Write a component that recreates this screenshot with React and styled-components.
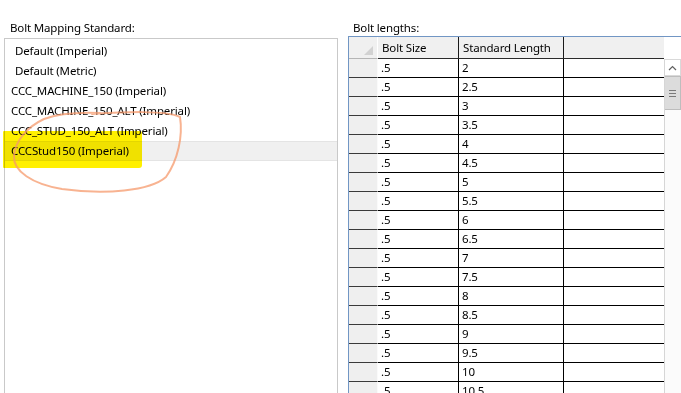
import React from "react";
import styled, { createGlobalStyle } from "styled-components";

const GlobalStyle = createGlobalStyle`
  html, body {
    margin: 0;
    padding: 0;
    background: #fff;
  }
  body {
    font-family: "Noto Sans", "Liberation Sans", sans-serif;
    font-size: 11.5px;
    letter-spacing: -0.15px;
    color: #000;
  }
`;

const Page = styled.div`
  position: relative;
  width: 681px;
  height: 393px;
  overflow: hidden;
  display: flex;
  gap: 10px;
  background: #fff;
`;

const Panel = styled.div`
  box-sizing: border-box;
  width: ${(p) => p.width}px;
  padding-top: 20px;
  padding-left: ${(p) => p.left || 0}px;
  display: flex;
  flex-direction: column;
  flex-shrink: 0;
`;

const Label = styled.div`
  height: 18px;
  line-height: 16px;
  padding-left: ${(p) => p.indent}px;
  white-space: nowrap;
`;

const ListBox = styled.div`
  flex: 1;
  border: 1px solid #c9c9c9;
  border-bottom: none;
  padding-top: 2px;
`;

const Item = styled.div`
  height: 20px;
  line-height: 18px;
  box-sizing: border-box;
  padding-left: ${(p) => (p.indent ? 10 : 6)}px;
  white-space: nowrap;
  background: ${(p) => (p.selected ? "#f0f0f0" : "transparent")};
  border: 1px solid ${(p) => (p.selected ? "#e4e4e4" : "transparent")};
  border-left: none;
  border-right: none;
`;

const Grid = styled.div`
  flex: 1;
  display: flex;
  border-top: 1px solid #7196c4;
  border-left: 1px solid #7196c4;
`;

const Table = styled.div`
  width: 315px;
  display: flex;
  flex-direction: column;
`;

const Row = styled.div`
  display: flex;
  height: ${(p) => (p.head ? 22 : 19)}px;
  flex-shrink: 0;
`;

const Corner = styled.div`
  position: relative;
  width: 29px;
  box-sizing: border-box;
  background: #f0f0f0;
  border-right: 1px solid #fff;
  border-bottom: 1px solid #b5b5b5;

  svg {
    position: absolute;
    right: 4px;
    bottom: 3px;
  }
`;

const HeadCell = styled.div`
  width: ${(p) => p.w}px;
  box-sizing: border-box;
  background: #f0f0f0;
  padding-left: 4px;
  line-height: 21px;
  white-space: nowrap;
  border-bottom: 1px solid #2b2b2b;
  border-right: ${(p) => (p.last ? "none" : "1px solid #1a1a1a")};
`;

const RowHead = styled.div`
  width: 29px;
  box-sizing: border-box;
  background: #efefef;
  border-right: 1px solid #fafafa;
  border-bottom: 1px solid #3a3a3a;
`;

const Cell = styled.div`
  width: ${(p) => p.w}px;
  box-sizing: border-box;
  padding-left: 3px;
  line-height: 18px;
  white-space: nowrap;
  border-bottom: 1px solid #000;
  border-right: ${(p) => (p.last ? "none" : "1px solid #000")};
`;

const ScrollCol = styled.div`
  width: 17px;
  padding-top: 22px;
  display: flex;
  flex-direction: column;
`;

const Track = styled.div`
  flex: 1;
  background: #fbfbfb;
  border-left: 1px solid #d6d6d6;
  display: flex;
  flex-direction: column;
`;

const Arrow = styled.div`
  height: 17px;
  box-sizing: border-box;
  border: 1px solid #d9d9d9;
  border-left: none;
  display: flex;
  align-items: center;
  justify-content: center;
  background: #fff;
`;

const Thumb = styled.div`
  height: 34px;
  box-sizing: border-box;
  background: #dcdcdc;
  border: 1px solid #bdbdbd;
  border-left: none;
  display: flex;
  flex-direction: column;
  align-items: center;
  justify-content: center;
  gap: 2px;
`;

const Grip = styled.span`
  width: 7px;
  height: 1px;
  background: #7a7a7a;
`;

const Highlight = styled.div`
  position: absolute;
  left: 3px;
  top: 131px;
  width: 139px;
  height: 37px;
  background: #fff000;
  mix-blend-mode: multiply;
  border-radius: 1px 2px 3px 1px;
`;

const Scribble = styled.svg`
  position: absolute;
  left: 0;
  top: 0;
  pointer-events: none;
`;

const mappings = [
  { name: "Default (Imperial)", indent: true },
  { name: "Default (Metric)", indent: true },
  { name: "CCC_MACHINE_150 (Imperial)" },
  { name: "CCC_MACHINE_150_ALT (Imperial)" },
  { name: "CCC_STUD_150_ALT (Imperial)" },
  { name: "CCCStud150 (Imperial)", selected: true },
];

const lengths = ["2", "2.5", "3", "3.5", "4", "4.5", "5", "5.5", "6", "6.5", "7", "7.5", "8", "8.5", "9", "9.5", "10", "10.5"];

export default function App() {
  return (
    <>
      <GlobalStyle />
      <Page>
        <Panel width={338} left={4}>
          <Label indent={6}>Bolt Mapping Standard:</Label>
          <ListBox>
            {mappings.map((m) => (
              <Item key={m.name} indent={m.indent} selected={m.selected}>
                {m.name}
              </Item>
            ))}
          </ListBox>
        </Panel>

        <Panel width={333}>
          <Label indent={5}>Bolt lengths:</Label>
          <Grid>
            <Table>
              <Row head>
                <Corner>
                  <svg width="9" height="9" viewBox="0 0 9 9">
                    <polygon points="9,0 9,9 0,9" fill="#d2d2d2" />
                  </svg>
                </Corner>
                <HeadCell w={81}>Bolt Size</HeadCell>
                <HeadCell w={105}>Standard Length</HeadCell>
                <HeadCell w={100} last />
              </Row>
              {lengths.map((len) => (
                <Row key={len}>
                  <RowHead />
                  <Cell w={81}>.5</Cell>
                  <Cell w={105}>{len}</Cell>
                  <Cell w={100} last />
                </Row>
              ))}
            </Table>
            <ScrollCol>
              <Track>
                <Arrow>
                  <svg width="9" height="6" viewBox="0 0 9 6">
                    <polyline points="1,5 4.5,1.5 8,5" fill="none" stroke="#606060" strokeWidth="1.2" />
                  </svg>
                </Arrow>
                <Thumb>
                  <Grip />
                  <Grip />
                  <Grip />
                </Thumb>
              </Track>
            </ScrollCol>
          </Grid>
        </Panel>

        <Highlight />
        <Scribble width="200" height="200" viewBox="0 0 200 200">
          <path
            d="M 92 114 C 125 112, 165 110, 180 117 C 183 136, 178 160, 166 177 C 150 191, 105 195, 62 189 C 32 184, 13 171, 14 156 C 15 141, 27 127, 44 119 C 60 113, 78 112, 100 113"
            fill="none"
            stroke="#f59a6c"
            strokeOpacity="0.75"
            strokeWidth="2"
            strokeLinecap="round"
          />
        </Scribble>
      </Page>
    </>
  );
}
